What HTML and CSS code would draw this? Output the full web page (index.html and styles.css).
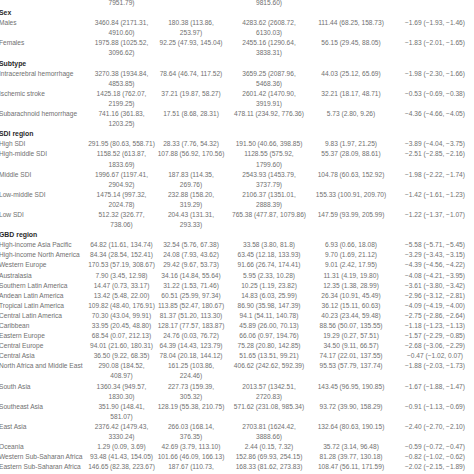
FILE: index.html
```html
<!DOCTYPE html>
<html lang="en">
<head>
<meta charset="utf-8">
<title>Stroke burden table</title>
<link rel="stylesheet" href="styles.css">
</head>
<body>
<table class="tbl">
  <colgroup>
    <col class="c-label"><col class="c-a"><col class="c-b"><col class="c-c"><col class="c-d"><col class="c-e">
  </colgroup>
  <tbody>
    <tr><td class="lbl"></td><td>7951.79)</td><td></td><td>9815.60)</td><td></td><td></td></tr>

    <tr class="sec"><td class="lbl">Sex</td><td></td><td></td><td></td><td></td><td></td></tr>
    <tr><td class="lbl">Males</td><td>3460.84 (2171.31, 4910.60)</td><td>180.38 (113.86, 253.97)</td><td>4283.62 (2608.72, 6130.03)</td><td>111.44 (68.25, 158.73)</td><td>−1.69 (−1.93, −1.46)</td></tr>
    <tr><td class="lbl">Females</td><td>1975.88 (1025.52, 3096.62)</td><td>92.25 (47.93, 145.04)</td><td>2455.16 (1290.64, 3838.31)</td><td>56.15 (29.45, 88.05)</td><td>−1.83 (−2.01, −1.65)</td></tr>

    <tr class="sec"><td class="lbl">Subtype</td><td></td><td></td><td></td><td></td><td></td></tr>
    <tr><td class="lbl">Intracerebral hemorrhage</td><td>3270.38 (1934.84, 4853.85)</td><td>78.64 (46.74, 117.52)</td><td>3659.25 (2087.96, 5468.36)</td><td>44.03 (25.12, 65.69)</td><td>−1.98 (−2.30, −1.66)</td></tr>
    <tr><td class="lbl">Ischemic stroke</td><td>1425.18 (762.07, 2199.25)</td><td>37.21 (19.87, 58.27)</td><td>2601.42 (1470.90, 3919.91)</td><td>32.21 (18.17, 48.71)</td><td>−0.53 (−0.69, −0.38)</td></tr>
    <tr><td class="lbl">Subarachnoid hemorrhage</td><td>741.16 (361.83, 1203.25)</td><td>17.51 (8.68, 28.31)</td><td>478.11 (234.92, 776.36)</td><td>5.73 (2.80, 9.26)</td><td>−4.36 (−4.66, −4.05)</td></tr>

    <tr class="sec"><td class="lbl">SDI region</td><td></td><td></td><td></td><td></td><td></td></tr>
    <tr><td class="lbl">High SDI</td><td>291.95 (80.63, 558.71)</td><td>28.33 (7.76, 54.32)</td><td>191.50 (40.66, 398.85)</td><td>9.83 (1.97, 21.25)</td><td>−3.89 (−4.04, −3.75)</td></tr>
    <tr><td class="lbl">High-middle SDI</td><td>1158.52 (613.87, 1833.69)</td><td>107.88 (56.92, 170.56)</td><td>1128.55 (575.92, 1799.60)</td><td>55.37 (28.09, 88.61)</td><td>−2.51 (−2.85, −2.16)</td></tr>
    <tr><td class="lbl">Middle SDI</td><td>1996.67 (1197.41, 2904.92)</td><td>187.83 (114.35, 269.76)</td><td>2543.93 (1453.79, 3737.79)</td><td>104.78 (60.63, 152.92)</td><td>−1.98 (−2.22, −1.74)</td></tr>
    <tr><td class="lbl">Low-middle SDI</td><td>1475.14 (997.32, 2024.78)</td><td>232.88 (158.20, 319.29)</td><td>2106.37 (1351.01, 2888.39)</td><td>155.33 (100.91, 209.70)</td><td>−1.42 (−1.61, −1.23)</td></tr>
    <tr><td class="lbl">Low SDI</td><td>512.32 (326.77, 738.06)</td><td>204.43 (131.31, 293.33)</td><td>765.38 (477.87, 1079.86)</td><td>147.59 (93.99, 205.99)</td><td>−1.22 (−1.37, −1.07)</td></tr>

    <tr class="sec"><td class="lbl">GBD region</td><td></td><td></td><td></td><td></td><td></td></tr>
    <tr><td class="lbl">High-income Asia Pacific</td><td>64.82 (11.61, 134.74)</td><td>32.54 (5.76, 67.38)</td><td>33.58 (3.80, 81.8)</td><td>6.93 (0.66, 18.08)</td><td>−5.58 (−5.71, −5.45)</td></tr>
    <tr><td class="lbl">High-income North America</td><td>84.34 (28.54, 152.41)</td><td>24.08 (7.93, 43.62)</td><td>63.45 (12.18, 133.93)</td><td>9.70 (1.69, 21.12)</td><td>−3.29 (−3.43, −3.15)</td></tr>
    <tr><td class="lbl">Western Europe</td><td>170.53 (57.19, 308.67)</td><td>29.42 (9.67, 53.73)</td><td>91.66 (26.74, 174.41)</td><td>9.01 (2.42, 17.95)</td><td>−4.39 (−4.56, −4.22)</td></tr>
    <tr><td class="lbl">Australasia</td><td>7.90 (3.45, 12.98)</td><td>34.16 (14.84, 55.64)</td><td>5.95 (2.33, 10.28)</td><td>11.31 (4.19, 19.80)</td><td>−4.08 (−4.21, −3.95)</td></tr>
    <tr><td class="lbl">Southern Latin America</td><td>14.47 (0.73, 33.17)</td><td>31.22 (1.53, 71.46)</td><td>10.25 (1.19, 23.82)</td><td>12.35 (1.38, 28.99)</td><td>−3.61 (−3.80, −3.42)</td></tr>
    <tr><td class="lbl">Andean Latin America</td><td>13.42 (5.48, 22.00)</td><td>60.51 (25.99, 97.34)</td><td>14.83 (6.03, 25.99)</td><td>26.34 (10.91, 45.49)</td><td>−2.96 (−3.12, −2.81)</td></tr>
    <tr><td class="lbl">Tropical Latin America</td><td>109.82 (48.40, 176.91)</td><td>113.85 (52.47, 180.67)</td><td>86.90 (35.98, 147.39)</td><td>36.12 (15.11, 60.63)</td><td>−4.09 (−4.19, −4.00)</td></tr>
    <tr><td class="lbl">Central Latin America</td><td>70.30 (43.04, 99.91)</td><td>81.37 (51.20, 113.30)</td><td>94.1 (54.11, 140.78)</td><td>40.23 (23.44, 59.48)</td><td>−2.75 (−2.86, −2.64)</td></tr>
    <tr><td class="lbl">Caribbean</td><td>33.95 (20.45, 48.80)</td><td>128.17 (77.57, 183.87)</td><td>45.89 (26.00, 70.13)</td><td>88.56 (50.07, 135.55)</td><td>−1.18 (−1.23, −1.13)</td></tr>
    <tr><td class="lbl">Eastern Europe</td><td>68.54 (0.07, 212.13)</td><td>24.76 (0.03, 76.72)</td><td>66.06 (0.97, 194.76)</td><td>19.29 (0.27, 57.51)</td><td>−1.57 (−2.29, −0.85)</td></tr>
    <tr><td class="lbl">Central Europe</td><td>94.01 (21.60, 180.31)</td><td>64.39 (14.43, 123.79)</td><td>75.28 (20.80, 142.85)</td><td>34.50 (9.11, 66.57)</td><td>−2.68 (−3.06, −2.29)</td></tr>
    <tr><td class="lbl">Central Asia</td><td>36.50 (9.22, 68.35)</td><td>78.04 (20.18, 144.12)</td><td>51.65 (13.51, 99.21)</td><td>74.17 (22.01, 137.55)</td><td>−0.47 (−1.02, 0.07)</td></tr>
    <tr><td class="lbl">North Africa and Middle East</td><td>290.08 (184.52, 408.97)</td><td>161.25 (103.86, 224.46)</td><td>406.62 (242.62, 592.39)</td><td>95.53 (57.79, 137.74)</td><td>−1.88 (−2.03, −1.73)</td></tr>
    <tr><td class="lbl">South Asia</td><td>1360.34 (949.57, 1830.30)</td><td>227.73 (159.39, 305.32)</td><td>2013.57 (1342.51, 2720.83)</td><td>143.45 (96.95, 190.85)</td><td>−1.67 (−1.88, −1.47)</td></tr>
    <tr><td class="lbl">Southeast Asia</td><td>351.90 (148.41, 581.07)</td><td>128.19 (55.38, 210.75)</td><td>571.62 (231.08, 985.34)</td><td>93.72 (39.90, 158.29)</td><td>−0.91 (−1.13, −0.69)</td></tr>
    <tr><td class="lbl">East Asia</td><td>2376.42 (1479.43, 3330.24)</td><td>266.03 (168.14, 376.35)</td><td>2703.81 (1624.42, 3888.66)</td><td>132.64 (80.63, 190.15)</td><td>−2.40 (−2.70, −2.10)</td></tr>
    <tr><td class="lbl">Oceania</td><td>1.29 (0.09, 3.69)</td><td>42.69 (3.79, 113.10)</td><td>2.44 (0.15, 7.32)</td><td>35.72 (3.14, 96.48)</td><td>−0.59 (−0.72, −0.47)</td></tr>
    <tr><td class="lbl">Western Sub-Saharan Africa</td><td>93.48 (41.43, 154.05)</td><td>101.66 (46.09, 166.13)</td><td>152.86 (69.93, 254.15)</td><td>81.28 (39.77, 130.18)</td><td>−0.82 (−1.02, −0.62)</td></tr>
    <tr><td class="lbl">Eastern Sub-Saharan Africa</td><td>146.65 (82.38, 223.67)</td><td>187.67 (110.73,</td><td>168.33 (81.62, 273.83)</td><td>108.47 (56.11, 171.59)</td><td>−2.02 (−2.15, −1.89)</td></tr>
  </tbody>
</table>
</body>
</html>
```
FILE: styles.css
```css
html, body {
  margin: 0;
  padding: 0;
  background: #ffffff;
  overflow: hidden;
}

.tbl {
  border-collapse: collapse;
  table-layout: fixed;
  width: 481px;
  margin: -2px 0 0 -1px;
  font-family: "Liberation Sans", Arial, sans-serif;
  font-size: 6.6px;
  line-height: 10.1px;
  color: #707070;
}

.c-label { width: 88px; }
.c-a { width: 69px; }
.c-b { width: 70px; }
.c-c { width: 86px; }
.c-d { width: 78px; }
.c-e { width: 90px; }

.tbl td {
  padding: 0;
  vertical-align: top;
  text-align: center;
}

.tbl td:nth-child(3) { padding: 0 1px; }
.tbl td:nth-child(4) { padding: 0 5px; }

.tbl td.lbl {
  text-align: left;
  white-space: nowrap;
}

.tbl .sec td.lbl {
  font-weight: bold;
  font-size: 6.9px;
  color: #2a2a2a;
}
```
